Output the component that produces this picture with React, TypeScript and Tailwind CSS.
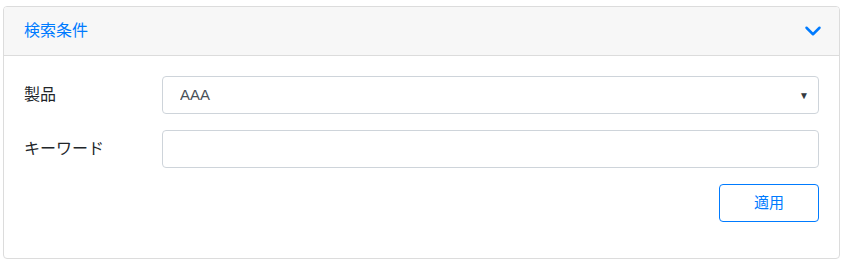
import { ChevronDown } from 'lucide-react';

const font = { fontFamily: '"Segoe UI", "Liberation Sans", "Noto Sans CJK JP", sans-serif' };

export default function App() {
  return (
    <div className="w-[844px] h-[263px] bg-white pt-[6px] px-[3px]" style={font}>
      {/* Search conditions card */}
      <div className="w-[837px] h-[253px] rounded-[4px] border border-[#dcdcdc] overflow-hidden">
        <div className="h-[49px] bg-[#f7f7f7] border-b border-[#dcdcdc] flex items-center justify-between pl-[20px] pr-[13px]">
          <span className="text-[16px] text-[#007bff] leading-none">検索条件</span>
          <ChevronDown className="w-[26px] h-[26px] text-[#007bff]" strokeWidth={2.3} />
        </div>

        <div className="pt-[20px] px-[20px] flex flex-col gap-[16px]">
          <div className="flex items-center">
            <label className="w-[138px] text-[16px] text-[#212529]">製品</label>
            <div className="relative flex-1">
              <select
                className="w-full h-[38px] appearance-none rounded-[4px] border border-[#ced4da] bg-white pl-[17px] pr-8 text-[15px] text-[#495057] outline-none"
                defaultValue="AAA"
              >
                <option>AAA</option>
              </select>
              <span className="pointer-events-none absolute right-[10px] top-1/2 -translate-y-1/2 text-[10px] text-[#343a40]">▼</span>
            </div>
          </div>

          <div className="flex items-center">
            <label className="w-[138px] text-[16px] text-[#212529]">キーワード</label>
            <input
              type="text"
              className="flex-1 h-[38px] rounded-[4px] border border-[#ced4da] bg-white px-[12px] text-[15px] text-[#495057] outline-none"
            />
          </div>

          <div className="flex justify-end">
            <button className="w-[100px] h-[38px] rounded-[4px] border border-[#007bff] bg-white text-[15px] text-[#007bff]">
              適用
            </button>
          </div>
        </div>
      </div>
    </div>
  );
}
